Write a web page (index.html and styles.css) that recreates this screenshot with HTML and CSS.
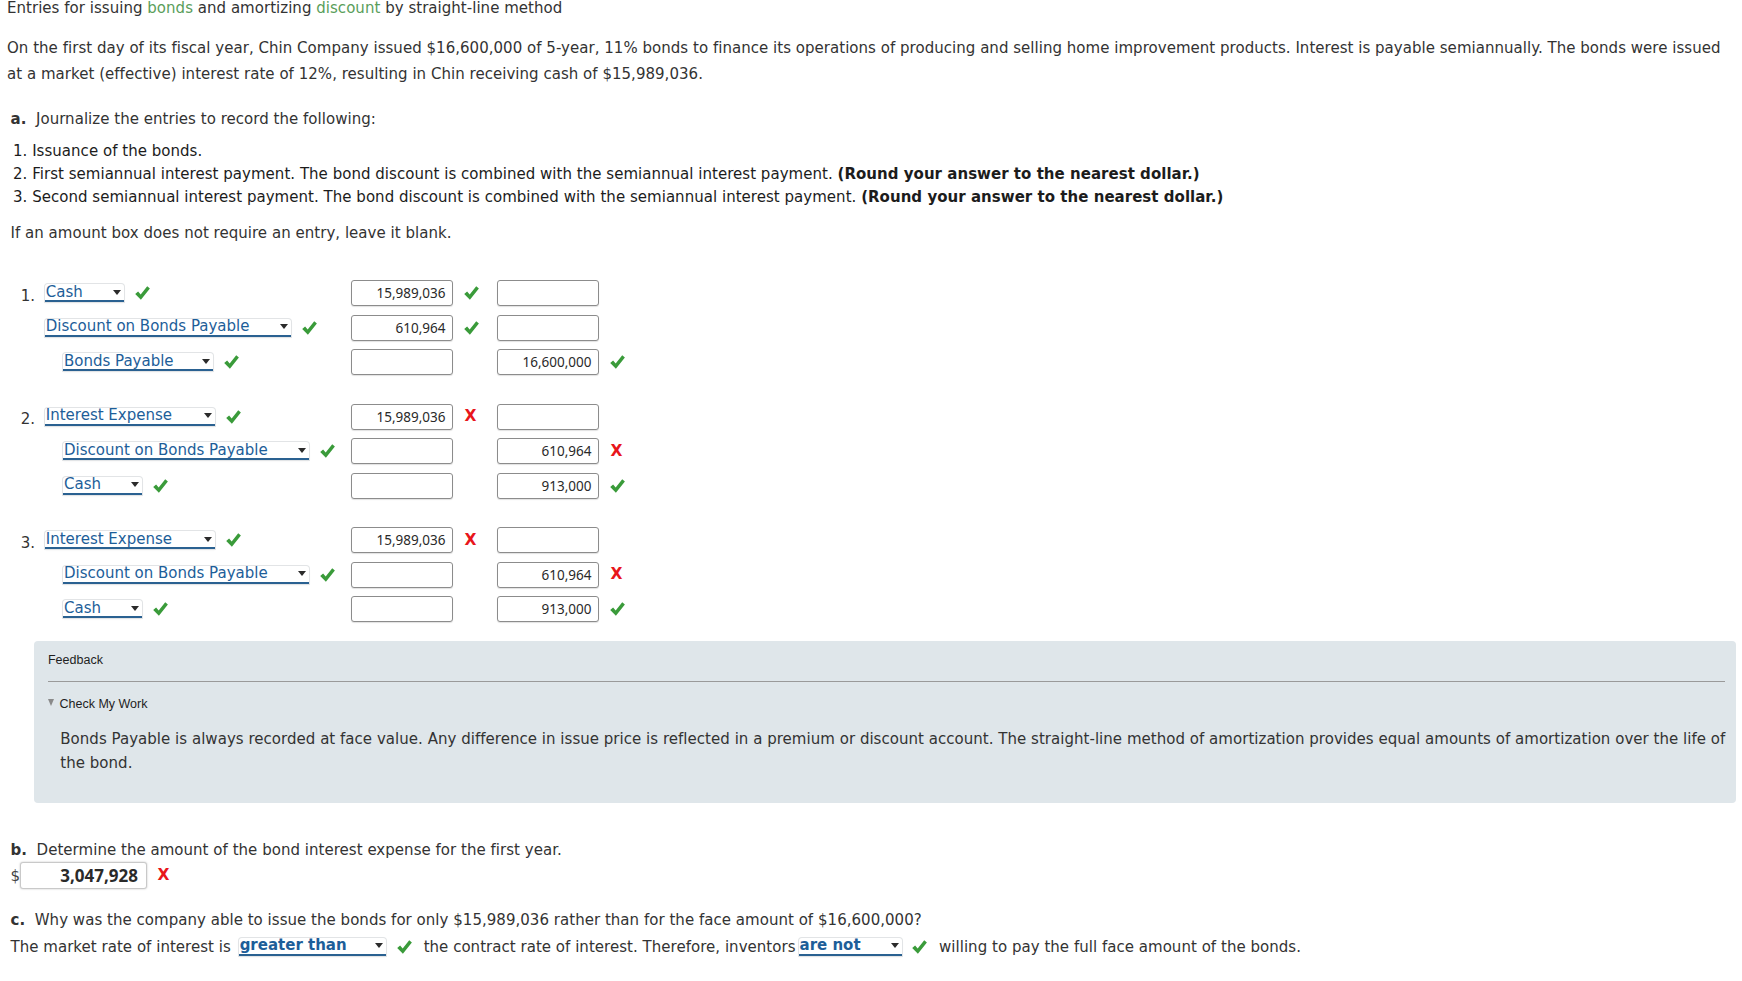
FILE: index.html
```html
<!DOCTYPE html>
<html lang="en">
<head>
<meta charset="utf-8">
<title>Entries for issuing bonds</title>
<link rel="stylesheet" href="styles.css">
</head>
<body>
<svg class="defs" width="0" height="0" aria-hidden="true">
  <defs>
    <symbol id="ck" viewBox="0 0 14 13">
      <path d="M0.2 7.5 L2.9 5.1 L5.3 7.8 L11.4 0.2 L13.9 2.2 L5.5 12.9 Z" fill="#3a9b3a"/>
    </symbol>
  </defs>
</svg>
<div class="page">
  <div class="title">Entries for issuing <span class="kw">bonds</span> and amortizing <span class="kw">discount</span> by straight-line method</div>

  <p class="intro">On the first day of its fiscal year, Chin Company issued $16,600,000 of 5-year, 11% bonds to finance its operations of producing and selling home improvement products. Interest is payable semiannually. The bonds were issued at a market (effective) interest rate of 12%, resulting in Chin receiving cash of $15,989,036.</p>

  <div class="part">
    <p class="lead"><b>a.</b>&nbsp; Journalize the entries to record the following:</p>
    <ol class="steps">
      <li>1. Issuance of the bonds.</li>
      <li>2. First semiannual interest payment. The bond discount is combined with the semiannual interest payment. <b>(Round your answer to the nearest dollar.)</b></li>
      <li>3. Second semiannual interest payment. The bond discount is combined with the semiannual interest payment. <b>(Round your answer to the nearest dollar.)</b></li>
    </ol>
    <p class="note">If an amount box does not require an entry, leave it blank.</p>
  </div>

  <div class="journal">
    <div class="entry">
      <div class="row">
        <span class="num">1.</span>
        <div class="acct"><span class="sel w-cash">Cash</span><svg class="ck"><use href="#ck"/></svg></div>
        <div class="box">15,989,036</div>
        <div class="mark"><svg class="ck"><use href="#ck"/></svg></div>
        <div class="box"></div>
        <div class="mark"></div>
      </div>
      <div class="row">
        <span class="num"></span>
        <div class="acct"><span class="sel w-disc">Discount on Bonds Payable</span><svg class="ck"><use href="#ck"/></svg></div>
        <div class="box">610,964</div>
        <div class="mark"><svg class="ck"><use href="#ck"/></svg></div>
        <div class="box"></div>
        <div class="mark"></div>
      </div>
      <div class="row">
        <span class="num"></span>
        <div class="acct ind"><span class="sel w-bp">Bonds Payable</span><svg class="ck"><use href="#ck"/></svg></div>
        <div class="box"></div>
        <div class="mark"></div>
        <div class="box">16,600,000</div>
        <div class="mark"><svg class="ck"><use href="#ck"/></svg></div>
      </div>
    </div>

    <div class="entry">
      <div class="row">
        <span class="num">2.</span>
        <div class="acct"><span class="sel w-ie">Interest Expense</span><svg class="ck"><use href="#ck"/></svg></div>
        <div class="box">15,989,036</div>
        <div class="mark"><span class="x">X</span></div>
        <div class="box"></div>
        <div class="mark"></div>
      </div>
      <div class="row">
        <span class="num"></span>
        <div class="acct ind"><span class="sel w-disc">Discount on Bonds Payable</span><svg class="ck"><use href="#ck"/></svg></div>
        <div class="box"></div>
        <div class="mark"></div>
        <div class="box">610,964</div>
        <div class="mark"><span class="x">X</span></div>
      </div>
      <div class="row">
        <span class="num"></span>
        <div class="acct ind"><span class="sel w-cash">Cash</span><svg class="ck"><use href="#ck"/></svg></div>
        <div class="box"></div>
        <div class="mark"></div>
        <div class="box">913,000</div>
        <div class="mark"><svg class="ck"><use href="#ck"/></svg></div>
      </div>
    </div>

    <div class="entry">
      <div class="row">
        <span class="num">3.</span>
        <div class="acct"><span class="sel w-ie">Interest Expense</span><svg class="ck"><use href="#ck"/></svg></div>
        <div class="box">15,989,036</div>
        <div class="mark"><span class="x">X</span></div>
        <div class="box"></div>
        <div class="mark"></div>
      </div>
      <div class="row">
        <span class="num"></span>
        <div class="acct ind"><span class="sel w-disc">Discount on Bonds Payable</span><svg class="ck"><use href="#ck"/></svg></div>
        <div class="box"></div>
        <div class="mark"></div>
        <div class="box">610,964</div>
        <div class="mark"><span class="x">X</span></div>
      </div>
      <div class="row">
        <span class="num"></span>
        <div class="acct ind"><span class="sel w-cash">Cash</span><svg class="ck"><use href="#ck"/></svg></div>
        <div class="box"></div>
        <div class="mark"></div>
        <div class="box">913,000</div>
        <div class="mark"><svg class="ck"><use href="#ck"/></svg></div>
      </div>
    </div>
  </div>

  <div class="feedback">
    <div class="fb-label">Feedback</div>
    <div class="fb-rule"></div>
    <div class="fb-toggle"><span class="tri"></span>Check My Work</div>
    <p class="fb-text">Bonds Payable is always recorded at face value. Any difference in issue price is reflected in a premium or discount account. The straight-line method of amortization provides equal amounts of amortization over the life of the bond.</p>
  </div>

  <div class="part part-b">
    <p class="lead"><b>b.</b>&nbsp; Determine the amount of the bond interest expense for the first year.</p>
    <div class="answer">
      <span class="dollar">$</span>
      <div class="big-box">3,047,928</div>
      <span class="x big-x">X</span>
    </div>
  </div>

  <div class="part part-c">
    <p class="lead"><b>c.</b>&nbsp; Why was the company able to issue the bonds for only $15,989,036 rather than for the face amount of $16,600,000?</p>
    <p class="line">The market rate of interest is <span class="sel bold w-gt">greater than</span><svg class="ck inl"><use href="#ck"/></svg><span class="after">the contract rate of interest. Therefore, inventors</span> <span class="sel bold w-an">are not</span><svg class="ck inl"><use href="#ck"/></svg><span class="after">willing to pay the full face amount of the bonds.</span></p>
  </div>
</div>
</body>
</html>
```
FILE: styles.css
```css
html, body {
  margin: 0;
  padding: 0;
  background: #fff;
}

body {
  font-family: "DejaVu Sans", Verdana, sans-serif;
  font-size: 15px;
  letter-spacing: 0.03px;
  color: #333;
}

.defs {
  position: absolute;
  width: 0;
  height: 0;
  overflow: hidden;
}

.page {
  padding: 0 6px 0 7px;
}

.title {
  line-height: 16px;
}

.kw {
  color: #5a9e5a;
}

.intro {
  margin: 20px 0 0;
  line-height: 25.5px;
}

.part {
  padding-left: 3.5px;
}

.lead {
  margin: 21px 0 0;
  line-height: 22px;
}

.steps {
  list-style: none;
  margin: 10px 0 0;
  padding: 0 0 0 2.5px;
  line-height: 22.8px;
  color: #1c1c1c;
}

.note {
  margin: 14px 0 0;
  line-height: 22px;
}

/* Journal */
.journal {
  margin-top: 36px;
  padding-left: 13.7px;
  display: flex;
  flex-direction: column;
  gap: 28.4px;
}

.entry {
  display: flex;
  flex-direction: column;
  gap: 8.5px;
}

.row {
  display: grid;
  grid-template-columns: 24.1px 306.7px 102px 43.5px 102.5px 40px;
  height: 26px;
  align-items: center;
}

.num {
  color: #333;
  padding-top: 5px;
}

.acct {
  display: flex;
  align-items: center;
  gap: 11px;
}

.acct.ind {
  padding-left: 18.2px;
}

.sel {
  display: inline-flex;
  align-items: center;
  justify-content: space-between;
  box-sizing: border-box;
  height: 18px;
  padding: 0 3px 0 1px;
  background: #fff;
  color: #1d5e99;
  line-height: 15px;
  border-radius: 3px 3px 0 0;
  border-bottom: 2px solid #2a6191;
  box-shadow: 0 0 0 1px #e2e4e6, 0 1px 2px rgba(0, 0, 0, 0.08);
  white-space: nowrap;
  letter-spacing: 0;
}

.sel::after {
  content: "";
  width: 0;
  height: 0;
  border-left: 4px solid transparent;
  border-right: 4px solid transparent;
  border-top: 5px solid #2b2b2b;
}

.sel.bold {
  font-weight: bold;
}

.w-cash { width: 79.5px; }
.w-disc { width: 246.5px; }
.w-bp { width: 150.5px; }
.w-ie { width: 170px; }
.w-gt { width: 147.5px; }
.w-an { width: 103px; }

.ck {
  width: 15px;
  height: 14px;
  flex: none;
}

.box {
  box-sizing: border-box;
  height: 26px;
  border: 1px solid #8c8c8c;
  border-radius: 3px;
  background: #fff;
  box-shadow: 0 1px 1px rgba(0, 0, 0, 0.12);
  font-family: "Noto Sans", "Open Sans", sans-serif;
  font-size: 13.5px;
  letter-spacing: 0;
  line-height: 24px;
  text-align: right;
  padding-right: 7px;
  color: #2a2a2a;
}

.mark {
  display: flex;
  align-items: center;
  padding-left: 11px;
}

.x {
  font-family: "DejaVu Sans", Verdana, sans-serif;
  font-weight: bold;
  font-size: 15.5px;
  line-height: 15px;
  color: #e8161b;
}

/* Feedback */
.feedback {
  margin: 19px 0 0 27.4px;
  background: #dfe6ea;
  border-radius: 4px;
  padding: 12px 4px 27px 13.6px;
}

.fb-label {
  font-family: "Liberation Sans", Arial, sans-serif;
  font-size: 12.5px;
  letter-spacing: 0;
  line-height: 15px;
  color: #1e1e1e;
}

.fb-rule {
  margin: 13px 7px 0 0;
  border-top: 1px solid #9a9a9a;
}

.fb-toggle {
  margin-top: 14.5px;
  display: flex;
  align-items: center;
  font-family: "Liberation Sans", Arial, sans-serif;
  font-size: 12.5px;
  letter-spacing: 0;
  line-height: 15px;
  color: #1e1e1e;
}

.tri {
  width: 0;
  height: 0;
  border-left: 3.5px solid transparent;
  border-right: 3.5px solid transparent;
  border-top: 7px solid #8a8a8a;
  margin: 0 5.5px 3px 0;
}

.fb-text {
  margin: 15.3px 0 0;
  padding-left: 12.3px;
  line-height: 24.5px;
  color: #333;
}

/* Part b */
.part-b .lead {
  margin-top: 36px;
}

.answer {
  display: flex;
  align-items: center;
  margin-top: 1.3px;
}

.dollar {
  color: #444;
  width: 9.5px;
}

.big-box {
  box-sizing: border-box;
  width: 126.5px;
  height: 27px;
  border: 1px solid #c9c9c9;
  border-radius: 3px;
  box-shadow: 0 0 2px rgba(0, 0, 0, 0.25);
  background: #fff;
  font-family: "Noto Sans", "Open Sans", sans-serif;
  font-weight: bold;
  font-size: 17px;
  letter-spacing: 0;
  line-height: 25px;
  text-align: right;
  padding-right: 7.5px;
  color: #2a2a2a;
}

.big-x {
  margin-left: 11px;
}

/* Part c */
.part-c .lead {
  margin-top: 19.7px;
}

.line {
  margin: 4.7px 0 0;
  line-height: 22px;
  display: flex;
  align-items: center;
  white-space: pre;
}

.line .sel {
  margin-left: 3px;
}

.ck.inl {
  margin-left: 10.5px;
}

.after {
  margin-left: 12px;
}
```
